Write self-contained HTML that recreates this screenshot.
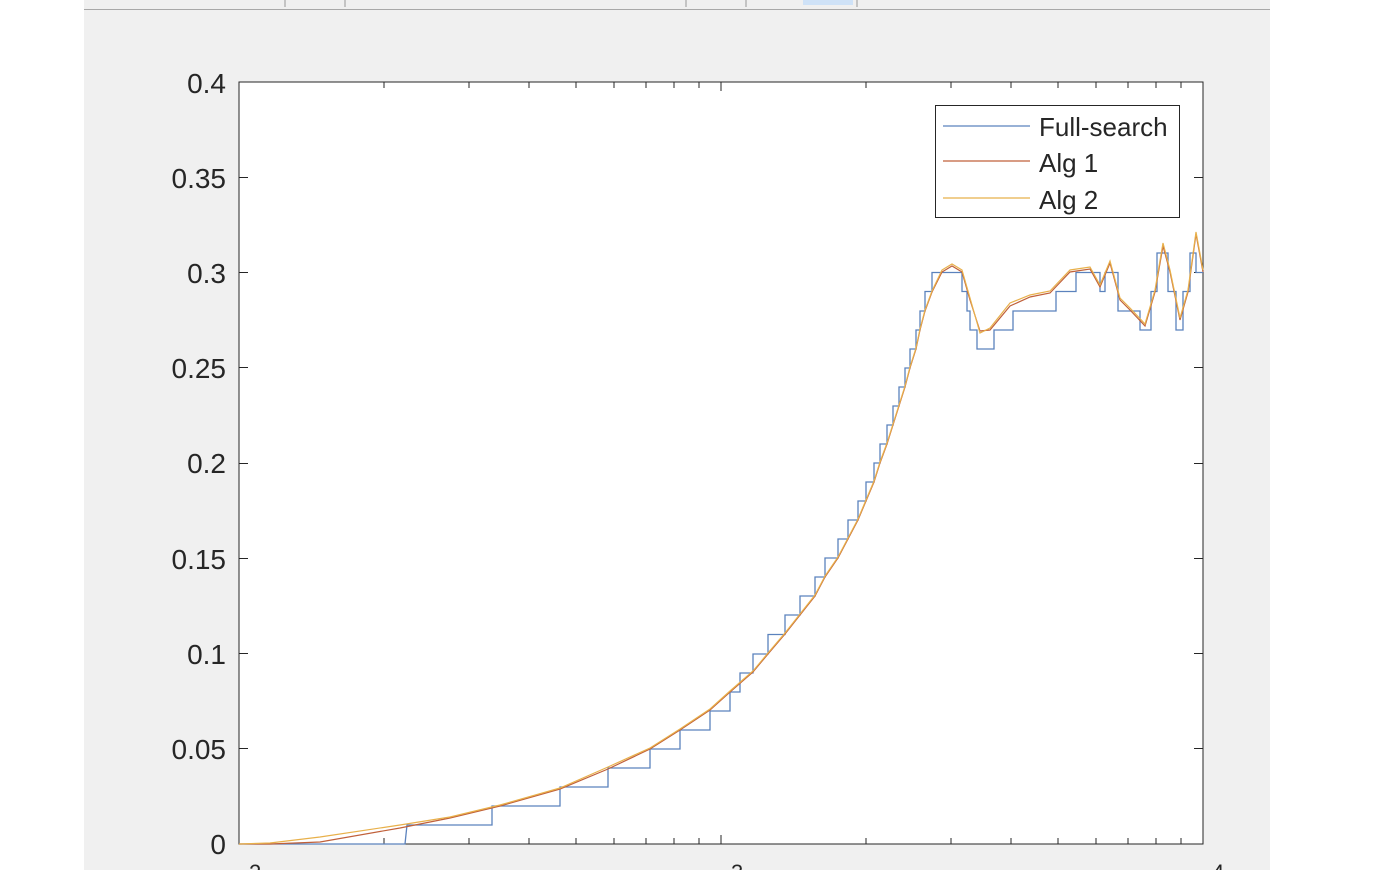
<!DOCTYPE html>
<html><head><meta charset="utf-8"><style>
html,body{margin:0;padding:0;background:#fff;width:1393px;height:870px;overflow:hidden}
</style></head><body>
<svg width="1393" height="870" xmlns="http://www.w3.org/2000/svg" style="position:absolute;left:0;top:0">
<rect x="0" y="0" width="1393" height="870" fill="#ffffff"/>
<rect x="84" y="0" width="1186" height="870" fill="#f0f0f0"/>
<line x1="84" y1="9.5" x2="1270" y2="9.5" stroke="#a8a8a8" stroke-width="1"/>
<line x1="285" y1="0" x2="285" y2="7" stroke="#999"/>
<line x1="345" y1="0" x2="345" y2="7" stroke="#999"/>
<line x1="686" y1="0" x2="686" y2="7" stroke="#999"/>
<line x1="746" y1="0" x2="746" y2="7" stroke="#999"/>
<line x1="857" y1="0" x2="857" y2="7" stroke="#999"/>
<rect x="803" y="0" width="50" height="5" fill="#cfe2f7"/>
<rect x="239" y="82" width="964" height="762" fill="#fff" stroke="#262626" stroke-width="1"/>
<g stroke="#262626" stroke-width="1">
<line x1="239" y1="748.5" x2="248" y2="748.5"/><line x1="1194" y1="748.5" x2="1203" y2="748.5"/>
<line x1="239" y1="653.5" x2="248" y2="653.5"/><line x1="1194" y1="653.5" x2="1203" y2="653.5"/>
<line x1="239" y1="558.5" x2="248" y2="558.5"/><line x1="1194" y1="558.5" x2="1203" y2="558.5"/>
<line x1="239" y1="463.5" x2="248" y2="463.5"/><line x1="1194" y1="463.5" x2="1203" y2="463.5"/>
<line x1="239" y1="367.5" x2="248" y2="367.5"/><line x1="1194" y1="367.5" x2="1203" y2="367.5"/>
<line x1="239" y1="272.5" x2="248" y2="272.5"/><line x1="1194" y1="272.5" x2="1203" y2="272.5"/>
<line x1="239" y1="177.5" x2="248" y2="177.5"/><line x1="1194" y1="177.5" x2="1203" y2="177.5"/>
<path d="M384 844v-6M469 844v-6M529 844v-6M576 844v-6M614 844v-6M646 844v-6M674 844v-6M699 844v-6M721 844v-9M866 844v-6M951 844v-6M1011 844v-6M1058 844v-6M1096 844v-6M1128 844v-6M1156 844v-6M1181 844v-6"/>
<path d="M384 82v6M469 82v6M529 82v6M576 82v6M614 82v6M646 82v6M674 82v6M699 82v6M721 82v9M866 82v6M951 82v6M1011 82v6M1058 82v6M1096 82v6M1128 82v6M1156 82v6M1181 82v6"/>
</g>
<g font-family="Liberation Sans, sans-serif" font-size="28" fill="#262626" text-anchor="end">
<text x="226" y="854">0</text>
<text x="226" y="759">0.05</text>
<text x="226" y="664">0.1</text>
<text x="226" y="569">0.15</text>
<text x="226" y="473">0.2</text>
<text x="226" y="378">0.25</text>
<text x="226" y="283">0.3</text>
<text x="226" y="188">0.35</text>
<text x="226" y="93">0.4</text>
</g>
<g font-family="Liberation Sans, sans-serif" font-size="22" fill="#262626">
<text x="249" y="880">2</text><text x="731" y="880">3</text><text x="1212" y="880">4</text>
</g>
<path fill="none" stroke="#5b82bd" stroke-width="1.3" d="M239 844H405L407 825H492V806H560V787H608V768H650V749H680V730H710V711H730V692H740V673H753V654H768V634.5H785V615H800V596H815V577H825V558H838V539H848V520H858V501H866V482H874V463H880V444H887V425H893V406H899V387H905V368H910V349H916V330H920V311H925V291.5H932V272.5H962V291.5H967V311H970V330H977V349H994V330H1013V311H1056V291.5H1076V272.5H1100V291.5H1105V272.5H1118V311H1140V330H1151V291.5H1157V253H1168V291.5H1176V330H1183V291.5H1190V253H1196V272.5H1203"/>
<path fill="none" stroke="#c0603a" stroke-width="1.2" d="M239 844L270 844L320 842L400 828L450 818L500 806L560 789L608 769L650 749L680 730L710 710L730 692L753 672L768 654L785 634L800 615L815 596L825 577L838 558L848 539L858 520L866 501L874 482L880 463L887 444L893 425L899 406L905 387L910 368L916 349L920 330L925 311L932 292L942 272L952 266L962 272L970 300L980 331L990 330L1010 306L1030 297L1050 293L1070 272L1090 269L1100 287L1110 263L1120 300L1130 310L1145 326L1155 292L1163 246L1170 272L1180 320L1188 292L1196 234L1203 272"/>
<path fill="none" stroke="#e8b04a" stroke-width="1.2" d="M239 844L270 843L320 837L400 825L450 817L500 805L560 788L608 767L650 748L680 729L710 709L730 691L753 671L768 653L785 633L800 614L815 595L825 576L838 557L848 538L858 519L866 500L874 481L880 462L887 443L893 424L899 405L905 386L910 367L916 348L920 329L925 310L932 291L942 270L952 264L962 270L970 298L980 333L990 328L1010 303L1030 295L1050 291L1070 270L1090 267L1100 285L1110 261L1120 298L1130 308L1145 324L1155 290L1163 243L1170 270L1180 318L1188 290L1196 232L1203 270"/>
<rect x="935.5" y="105.5" width="244" height="112" fill="#fff" stroke="#262626" stroke-width="1"/>
<line x1="943" y1="126" x2="1030" y2="126" stroke="#5b82bd" stroke-width="1.2"/>
<line x1="943" y1="161" x2="1030" y2="161" stroke="#c0603a" stroke-width="1.2"/>
<line x1="943" y1="198" x2="1030" y2="198" stroke="#e8b04a" stroke-width="1.2"/>
<g font-family="Liberation Sans, sans-serif" font-size="26" fill="#262626">
<text x="1039" y="136">Full-search</text>
<text x="1039" y="172">Alg 1</text>
<text x="1039" y="209">Alg 2</text>
</g>
</svg>
</body></html>
